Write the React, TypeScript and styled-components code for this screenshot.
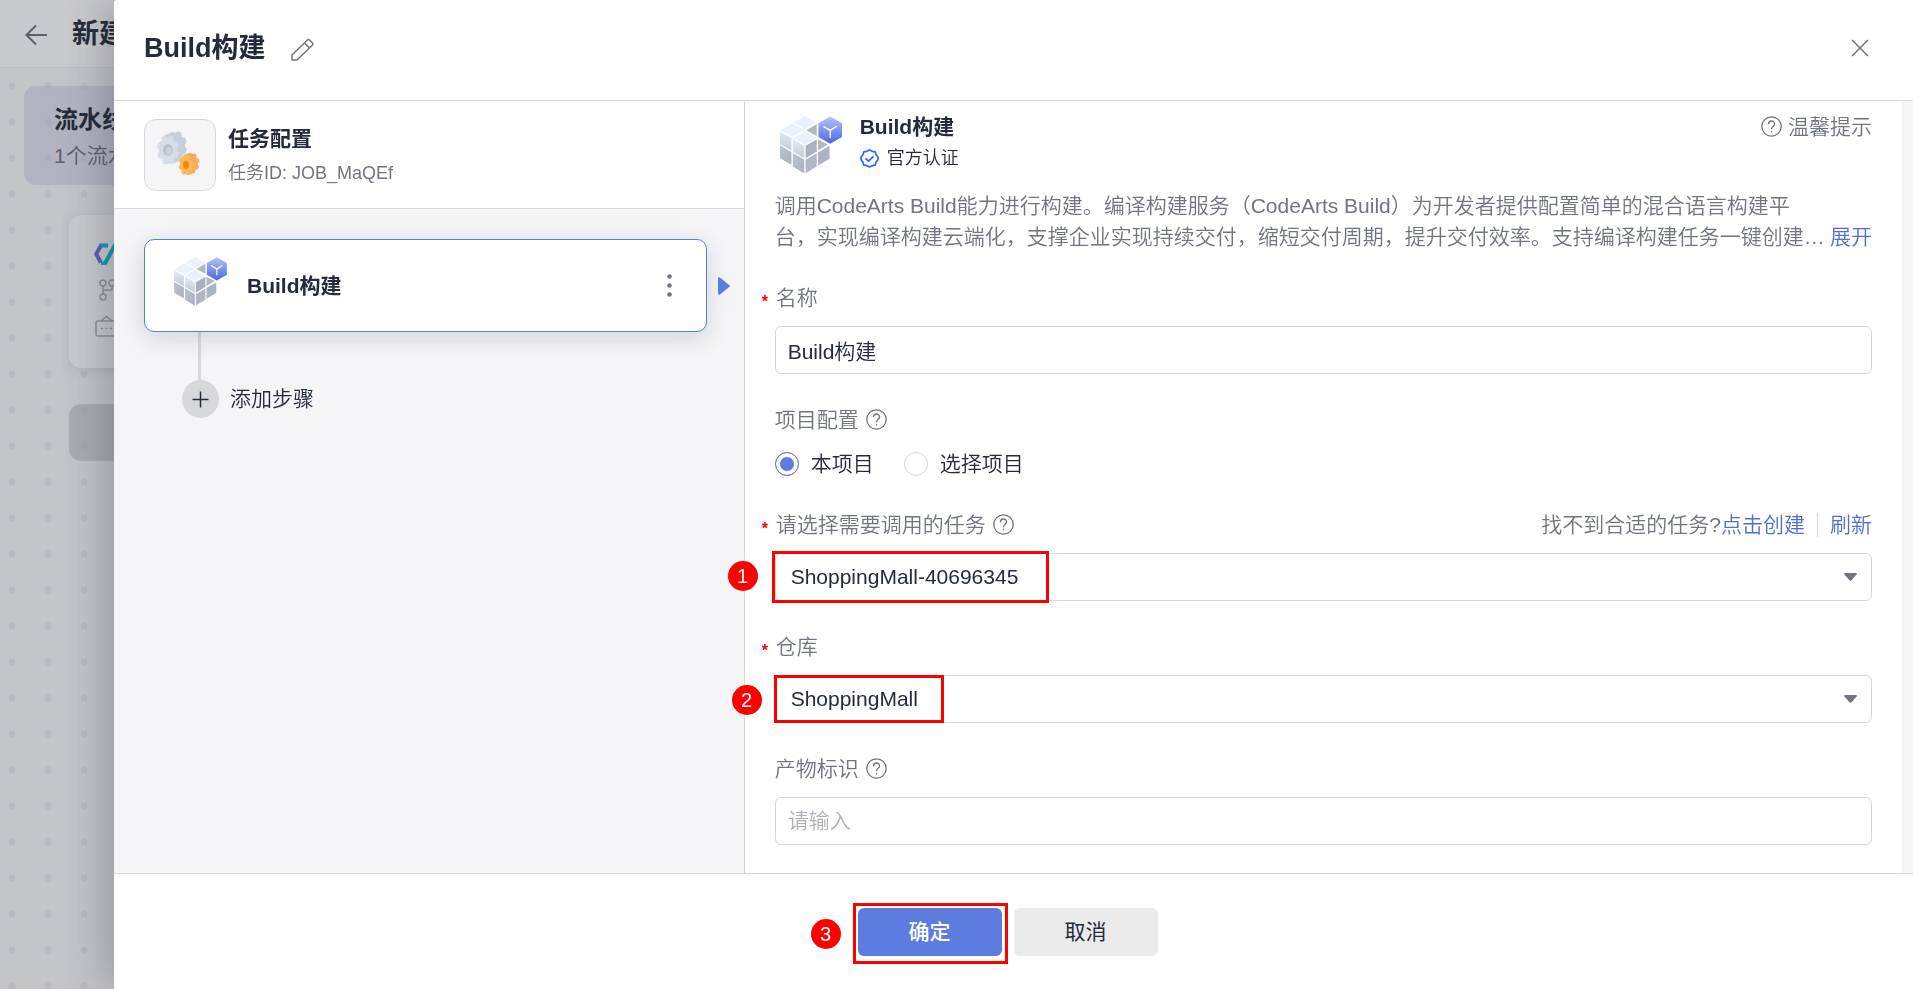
import React, { useId, useState } from "react";
import styled, { createGlobalStyle, css } from "styled-components";

const color = {
  ink: "#252b3a",
  muted: "#71757f",
  line: "#d7d8da",
  brand: "#5e7ce0",
  link: "#526ecc",
  pane: "#f5f5f8",
  mark: "#ff0000",
};

const GlobalStyle = createGlobalStyle`
  * { box-sizing: border-box; }
  body {
    margin: 0;
    color: ${color.ink};
    background: #c4c5c9;
    font-family: "Liberation Sans", "Noto Sans CJK SC", sans-serif;
    font-size: 21px;
    font-weight: 350;
    line-height: 32px;
  }
  button, input, select { font: inherit; color: inherit; }
  h1, h2, h3, p { margin: 0; }
  svg { display: block; flex: none; }
`;

/* ---------- page behind the drawer ---------- */

const Backdrop = styled.main`
  min-height: 100vh;
  overflow: hidden;
  background: radial-gradient(circle at 12px 18px, #b9babf 3px, transparent 4px) 0 68px / 36px 36px #c4c5c9;
`;

const BackHeader = styled.header`
  display: flex;
  align-items: center;
  gap: 24px;
  height: 68px;
  padding: 2px 0 0 24px;
  background: #c9cacd;
  border-bottom: 1px solid #bcbdc0;
  white-space: nowrap;
`;

const PlainButton = styled.button`
  display: flex;
  padding: 0;
  border: 0;
  background: none;
  color: ${color.muted};
  cursor: pointer;
`;

const BackTitle = styled.h1`
  font-size: 27px;
  font-weight: 700;
  padding-bottom: 2px;
`;

const SourceStage = styled.section`
  margin: 18px 0 0 24px;
  height: 99px;
  padding: 16px 30px;
  border-radius: 12px 0 0 12px;
  background: rgba(158, 161, 186, 0.5);
  white-space: nowrap;
  overflow: hidden;
`;

const StageTitle = styled.h2`
  font-size: 24px;
  line-height: 35px;
`;

const StageText = styled.p`
  color: #5d6069;
  line-height: 38px;
`;

const SourceCard = styled.section`
  display: flex;
  flex-direction: column;
  gap: 14px;
  margin: 30px 0 0 69px;
  height: 153px;
  padding: 28px 0 0 25px;
  border-radius: 12px 0 0 12px;
  background: #c9cacd;
  color: #8f9299;
  box-shadow: 0 3px 12px rgba(37, 43, 58, 0.12);
`;

const AddSource = styled.div`
  margin: 36px 0 0 69px;
  height: 57px;
  border-radius: 12px 0 0 12px;
  background: rgba(144, 147, 156, 0.5);
`;

/* ---------- drawer ---------- */

const Drawer = styled.aside`
  position: fixed;
  inset: 0 0 0 114px;
  display: flex;
  flex-direction: column;
  background: #fff;
  border-top-left-radius: 3px;
  box-shadow: -6px 0 45px rgba(37, 43, 58, 0.32);
`;

const DrawerHeader = styled.header`
  flex: none;
  display: flex;
  align-items: center;
  gap: 25px;
  height: 101px;
  padding: 0 44px 4px 30px;
  border-bottom: 1px solid ${color.line};
`;

const DrawerTitle = styled.h2`
  font-size: 27px;
`;

const CloseButton = styled(PlainButton)`
  margin-left: auto;
`;

const DrawerBody = styled.div`
  flex: 1;
  display: grid;
  grid-template-columns: 35% 1fr;
`;

const StepPane = styled.section`
  background: ${color.pane};
`;

const JobHeader = styled.header`
  display: flex;
  gap: 12px;
  height: 108px;
  padding: 18px 30px 0;
  background: #fff;
  border-bottom: 1px solid ${color.line};
`;

const JobIcon = styled.div`
  width: 72px;
  height: 72px;
  border: 1px solid ${color.line};
  border-radius: 12px;
  background: ${color.pane};
`;

const JobTitle = styled.h3`
  font-size: 21px;
  padding-top: 4px;
`;

const JobId = styled.p`
  font-size: 18px;
  line-height: 36px;
  color: ${color.muted};
`;

const StepRow = styled.div`
  display: flex;
  align-items: center;
  gap: 11px;
  padding: 30px 14px 0 30px;
`;

const StepCard = styled.article`
  flex: 1;
  display: flex;
  align-items: center;
  height: 93px;
  padding: 0 34px 0 29px;
  border: 1px solid ${color.brand};
  border-radius: 10px;
  background: #fff;
  box-shadow: 0 6px 24px rgba(37, 43, 58, 0.16);
`;

const StepIcon = styled.div`
  padding-bottom: 8px;
  margin-right: 20px;
`;

const StepName = styled.h3`
  flex: 1;
  font-size: 21px;
`;

const Connector = styled.div`
  width: 3px;
  height: 48px;
  margin-left: 84px;
  background: ${color.line};
`;

const AddStep = styled(PlainButton)`
  align-items: center;
  gap: 11px;
  margin-left: 68px;
  color: ${color.ink};
`;

const PlusDot = styled.span`
  display: grid;
  place-items: center;
  width: 37px;
  height: 38px;
  border-radius: 50%;
  background: ${color.line};
`;

/* ---------- settings pane ---------- */

const SettingsPane = styled.section`
  min-width: 0;
  padding: 10px 30px 28px;
  border-left: 1px solid ${color.line};
  border-right: 11px solid ${color.pane};
`;

const PluginHeader = styled.header`
  display: flex;
  height: 64px;
  padding-left: 5px;
`;

const PluginIcon = styled.div`
  padding-top: 5px;
  margin-right: 18px;
`;

const PluginName = styled.h3`
  font-size: 21px;
`;

const Certified = styled.p`
  display: flex;
  align-items: center;
  gap: 8px;
  font-size: 18px;
  line-height: 30px;
`;

const TipButton = styled(PlainButton)`
  align-items: center;
  align-self: flex-start;
  gap: 6px;
  margin-left: auto;
`;

const Summary = styled.div`
  display: flex;
  align-items: flex-end;
  gap: 4px;
  padding: 15px 0 30px;
  color: ${color.muted};
  line-height: 31px;
`;

const SummaryText = styled.p`
  flex: 1;
`;

const Link = styled.a`
  color: ${color.link};
  text-decoration: none;
  white-space: nowrap;
`;

const Form = styled.form`
  display: flex;
  flex-direction: column;
  gap: 30px;
`;

const Field = styled.div`
  display: flex;
  flex-direction: column;
  gap: 12px;
`;

const LabelRow = styled.div`
  display: flex;
  align-items: center;
  gap: 7px;
  height: 32px;
  color: ${color.muted};
`;

const Label = styled.label<{ $required?: boolean }>`
  ${(p) =>
    p.$required &&
    css`
      margin-left: -13px;
      &::before {
        content: "*";
        display: inline-block;
        width: 14px;
        color: ${color.mark};
        font-size: 16px;
        font-weight: 700;
        line-height: 16px;
        vertical-align: -2px;
      }
    `}
`;

const HelpMark = styled.span`
  display: block;
  padding-bottom: 2px;
`;

const Assist = styled.div`
  display: flex;
  align-items: center;
  margin-left: auto;
`;

const Divider = styled.span`
  width: 1px;
  height: 24px;
  margin: 0 12px;
  background: ${color.line};
`;

const controlBox = css`
  width: 100%;
  height: 48px;
  border: 1px solid ${color.line};
  border-radius: 6px;
  background: #fff;
  outline: 0;
`;

const TextInput = styled.input`
  ${controlBox}
  padding: 0 12px;
  &::placeholder { color: #adb0b8; opacity: 1; }
`;

const SelectBox = styled.div`
  position: relative;
`;

const NativeSelect = styled.select`
  ${controlBox}
  display: block;
  appearance: none;
  padding: 0 40px 0 15px;
`;

const Caret = styled.svg`
  position: absolute;
  right: 15px;
  top: 20px;
  pointer-events: none;
`;

const RadioRow = styled.div`
  display: flex;
  align-items: center;
  gap: 30px;
  height: 31px;
`;

const RadioLabel = styled.label`
  display: flex;
  align-items: center;
  gap: 12px;
`;

const Radio = styled.input`
  appearance: none;
  width: 24px;
  height: 24px;
  margin: 0;
  border: 1px solid ${color.line};
  border-radius: 50%;
  background: #fff;
  &:checked {
    border-color: ${color.brand};
    background: ${color.brand};
    box-shadow: inset 0 0 0 4px #fff;
  }
`;

/* ---------- footer ---------- */

const Footer = styled.footer`
  flex: none;
  display: flex;
  justify-content: center;
  gap: 12px;
  padding: 34px 12px 33px 0;
  border-top: 1px solid ${color.line};
`;

const ActionBox = styled.div`
  position: relative;
`;

const Action = styled.button<{ $primary?: boolean }>`
  display: block;
  width: 144px;
  height: 48px;
  border: 0;
  border-radius: 6px;
  background: ${(p) => (p.$primary ? color.brand : "#ebebeb")};
  color: ${(p) => (p.$primary ? "#fff" : color.ink)};
  font-weight: ${(p) => (p.$primary ? 500 : 400)};
  cursor: pointer;
`;

/* ---------- numbered callouts over the controls ---------- */

const Outline = styled.span<{ $top: number; $left: number; $width: number; $height: number }>`
  position: absolute;
  top: ${(p) => p.$top}px;
  left: ${(p) => p.$left}px;
  width: ${(p) => p.$width}px;
  height: ${(p) => p.$height}px;
  border: 3px solid ${color.mark};
  pointer-events: none;
`;

const Badge = styled.span<{ $top: number; $left: number }>`
  position: absolute;
  top: ${(p) => p.$top}px;
  left: ${(p) => p.$left}px;
  width: 30px;
  height: 30px;
  border-radius: 50%;
  background: ${color.mark};
  color: #fff;
  font-size: 20px;
  line-height: 30px;
  text-align: center;
`;

/* ---------- drawings ---------- */

const HelpIcon = () => (
  <HelpMark>
    <svg width="21" height="21" viewBox="0 0 21 21" fill="none" stroke={color.muted} strokeWidth="1.3">
      <circle cx="10.5" cy="10.5" r="9.7" />
      <path d="M7.4 8.200C7.400 4 13.600 4 13.600 7.900c0 2.300-3.100 2.400-3.100 5.300" />
      <path d="M10.5 14.900v1.500" />
    </svg>
  </HelpMark>
);

const CubeIcon = ({ width }: { width: number }) => {
  const id = useId();
  return (
    <svg width={width} height={Math.round((width * 170) / 183)} viewBox="33 35 184 171">
      <defs>
        <linearGradient id={id + "b"} x1="0" y1="0" x2="0" y2="1">
          <stop offset="0" stopColor="#b5c4fb" />
          <stop offset="1" stopColor="#4a68dc" />
        </linearGradient>
        <linearGradient id={id + "l"} x1="0" y1="0" x2="0" y2="1">
          <stop offset="0" stopColor="#e2ebf5" />
          <stop offset="1" stopColor="#c3cad6" />
        </linearGradient>
        <linearGradient id={id + "g"} x1="0" y1="0" x2="1" y2="1">
          <stop offset="0" stopColor="#bcc4d1" />
          <stop offset="1" stopColor="#a9b0bf" />
        </linearGradient>
      </defs>
      <g fill="#e8f1fc">
        <path d="M107 35l33 19-33 20-34-20z" />
        <path d="M70 57l34 20-34 20-35-20z" />
        <path d="M107 80l34 20-34 20-35-20z" />
      </g>
      <path d="M142 58v36l-31-17z" fill="#b2b8c1" />
      <path d="M33 81l34 19v37l-34-19z" fill={`url(#${id}l)`} />
      <path d="M71 103l34 20v37l-34-20z" fill={`url(#${id}l)`} />
      <path d="M33 122l34 19v38l-34-19z" fill={`url(#${id}g)`} />
      <path d="M71 144l34 20v41l-34-21z" fill={`url(#${id}g)`} />
      <path d="M109 123l33-19v36l-33 20z" fill="#aab1be" />
      <path d="M109 164l33-19v39l-33 20z" fill="#b1b7c4" />
      <path d="M146 143l34-20v38l-34 20z" fill="#adb4c1" />
      <path d="M146 104l29 15-29 18z" fill="#b2b8c1" />
      <path d="M182 36l35 20v41l-35 20-35-20V56z" fill={`url(#${id}b)`} />
      <path d="M162 65l20 12 19-12M182 77v22" fill="none" stroke="#fff" strokeWidth="4" />
    </svg>
  );
};

const gearPath = (cx: number, cy: number, rx: number, ry: number, turn: number) => {
  const points: string[] = [];
  const teeth = 8;
  for (let i = 0; i < teeth; i += 1) {
    [
      [0, 0.8],
      [0.18, 1],
      [0.5, 1],
      [0.68, 0.8],
    ].forEach(([step, r]) => {
      const a = ((i + step + turn) / teeth) * Math.PI * 2;
      points.push(`${(cx + Math.cos(a) * rx * r).toFixed(1)} ${(cy + Math.sin(a) * ry * r).toFixed(1)}`);
    });
  }
  return `M${points.join("L")}Z`;
};

const GearsIcon = () => (
  <svg width="70" height="70" viewBox="0 0 70 70" strokeLinejoin="round">
    {[8, 7, 6, 5, 4, 3, 2, 1].map((d) => (
      <path key={d} d={gearPath(23 + d, 30 - d / 2, 10, 14, 0.1)} fill="#c6cfdb" stroke="#c6cfdb" strokeWidth="2" />
    ))}
    <path d={gearPath(23, 30, 10, 14, 0.1)} fill="#d6dde8" stroke="#d6dde8" strokeWidth="2" />
    <ellipse cx="23" cy="30" rx="5" ry="6" fill="#b7c1ce" />
    <ellipse cx="24" cy="31" rx="3" ry="4" fill="#c9d1dc" />
    {[6, 5, 4, 3, 2, 1].map((d) => (
      <path key={d} d={gearPath(41 + d, 45 - d / 3, 7, 10, 0.3)} fill="#f5a23a" stroke="#f5b35c" />
    ))}
    <path d={gearPath(41, 45, 7, 10, 0.3)} fill="#fdb95f" stroke="#fdb95f" />
    <ellipse cx="41" cy="45" rx="3" ry="4" fill="#ff8500" />
  </svg>
);

const CertifiedIcon = () => (
  <svg width="19" height="19" viewBox="0 0 19 19" fill="none" stroke="#2468ff" strokeWidth="1.7" strokeLinejoin="round">
    <path d="M9.5 1l2.7 1.300 3 .6.9 2.900L18 8.200v2.600l-1.900 2.400-.9 2.900-3 .6L9.500 18l-2.700-1.300-3-.6-.9-2.900L1 10.800V8.200l1.900-2.400.9-2.900 3-.6z" />
    <path d="M5.5 9.4l3 2.8 5-4.9" />
  </svg>
);

const LogoIcon = () => (
  <svg width="36" height="22" viewBox="0 0 36 22" fill="none" strokeWidth="4">
    <path d="M8 2.5H7L2.3 11l4.500 8.500" stroke="#5464b4" />
    <path d="M7 2.5h7" stroke="#1a9bb0" />
    <path d="M7 20.500h4L22 0" stroke="#1499b8" />
    <path d="M22 19h7l5-8-5-8.500" stroke="#17a3a5" />
  </svg>
);

const BranchIcon = () => (
  <svg width="24" height="22" viewBox="-5 0 24 22" fill="none" stroke="currentColor" strokeWidth="1.6">
    <circle cx="4" cy="4" r="3" />
    <circle cx="4" cy="18" r="3" />
    <circle cx="13" cy="4" r="3" />
    <path d="M4 7v8M13 7v4H4" />
  </svg>
);

const PackageIcon = () => (
  <svg width="24" height="22" viewBox="0 0 24 22" fill="none" stroke="currentColor" strokeWidth="1.6">
    <rect x="2" y="6" width="21" height="15" rx="2" />
    <path d="M7 6l5.500-4.500L18 6" />
    <path d="M7 13.500h2M11.500 13.500h2M16 13.500h2" />
  </svg>
);

const Help = ({ about }: { about: string }) => (
  <PlainButton type="button" aria-label={about}>
    <HelpIcon />
  </PlainButton>
);

const CaretIcon = () => (
  <Caret width="13" height="8" viewBox="0 0 13 8" fill={color.muted}>
    <path d="M1 0h11q1.400.3.600 1.500L7.500 7.300q-1 1-2 0L.4 1.500Q-.4.300 1 0z" />
  </Caret>
);

export default function App() {
  const [name, setName] = useState("Build构建");
  const [artifact, setArtifact] = useState("");
  const [scope, setScope] = useState("current");

  return (
    <>
      <GlobalStyle />
      <Backdrop>
        <BackHeader>
          <PlainButton type="button" aria-label="返回">
            <svg width="24" height="22" viewBox="0 0 24 22" fill="none" stroke="#5d6069" strokeWidth="2">
              <path d="M23 11H3M12 1.500L2.500 11 12 20.500" />
            </svg>
          </PlainButton>
          <BackTitle>新建</BackTitle>
        </BackHeader>
        <SourceStage>
          <StageTitle>流水线</StageTitle>
          <StageText>1个流水</StageText>
        </SourceStage>
        <SourceCard>
          <LogoIcon />
          <BranchIcon />
          <PackageIcon />
        </SourceCard>
        <AddSource />
      </Backdrop>

      <Drawer aria-label="Build构建">
        <DrawerHeader>
          <DrawerTitle>Build构建</DrawerTitle>
          <PlainButton type="button" aria-label="编辑">
            <svg width="23" height="25" viewBox="0 -2 23 25" fill="none" stroke="currentColor" strokeWidth="1.500" strokeLinejoin="round">
              <path d="M1 22v-5L16.500 2q1-1 2 0L21.500 5q1 1 0 2L6 22zM13.500 5l5 5" />
            </svg>
          </PlainButton>
          <CloseButton type="button" aria-label="关闭">
            <svg width="18" height="18" viewBox="0 0 18 18" fill="none" stroke="currentColor" strokeWidth="1.500">
              <path d="M1 1l16 16M17 1L1 17" />
            </svg>
          </CloseButton>
        </DrawerHeader>

        <DrawerBody>
          <StepPane>
            <JobHeader>
              <JobIcon>
                <GearsIcon />
              </JobIcon>
              <div>
                <JobTitle>任务配置</JobTitle>
                <JobId>任务ID: JOB_MaQEf</JobId>
              </div>
            </JobHeader>
            <StepRow>
              <StepCard>
                <StepIcon>
                  <CubeIcon width={53} />
                </StepIcon>
                <StepName>Build构建</StepName>
                <PlainButton type="button" aria-label="更多">
                  <svg width="5" height="24" viewBox="0 0 5 24" fill={color.muted}>
                    <circle cx="2.500" cy="2.500" r="2.300" />
                    <circle cx="2.500" cy="11.500" r="2.300" />
                    <circle cx="2.500" cy="20.500" r="2.300" />
                  </svg>
                </PlainButton>
              </StepCard>
              <svg width="12" height="18" viewBox="0 0 12 18" fill={color.brand}>
                <path d="M0 1.500Q0 0 1.500.2L2.500 1l9 7.300q.8.700 0 1.400L2.500 17l-1 .8Q0 18 0 16.500z" />
              </svg>
            </StepRow>
            <Connector />
            <AddStep type="button">
              <PlusDot>
                <svg width="17" height="17" viewBox="0 0 17 17" stroke={color.ink} strokeWidth="1.500">
                  <path d="M8.500 0.500v16M0.500 8.500h16" />
                </svg>
              </PlusDot>
              添加步骤
            </AddStep>
          </StepPane>

          <SettingsPane>
            <PluginHeader>
              <PluginIcon>
                <CubeIcon width={62} />
              </PluginIcon>
              <div>
                <PluginName>Build构建</PluginName>
                <Certified>
                  <CertifiedIcon />
                  官方认证
                </Certified>
              </div>
              <TipButton type="button">
                <HelpIcon />
                温馨提示
              </TipButton>
            </PluginHeader>
            <Summary>
              <SummaryText>
                调用CodeArts Build能力进行构建。编译构建服务（CodeArts Build）为开发者提供配置简单的混合语言构建平台，实现编译构建云端化，支撑企业实现持续交付，缩短交付周期，提升交付效率。支持编译构建任务一键创建…
              </SummaryText>
              <Link href="#more">展开</Link>
            </Summary>

            <Form id="plugin-form" onSubmit={(e) => e.preventDefault()}>
              <Field>
                <LabelRow>
                  <Label $required htmlFor="name">名称</Label>
                </LabelRow>
                <TextInput id="name" value={name} onChange={(e) => setName(e.target.value)} />
              </Field>

              <Field role="radiogroup" aria-labelledby="scope-label">
                <LabelRow>
                  <span id="scope-label">项目配置</span>
                  <Help about="项目配置说明" />
                </LabelRow>
                <RadioRow>
                  <RadioLabel>
                    <Radio type="radio" name="scope" checked={scope === "current"} onChange={() => setScope("current")} />
                    本项目
                  </RadioLabel>
                  <RadioLabel>
                    <Radio type="radio" name="scope" checked={scope === "other"} onChange={() => setScope("other")} />
                    选择项目
                  </RadioLabel>
                </RadioRow>
              </Field>

              <Field>
                <LabelRow>
                  <Label $required htmlFor="task">请选择需要调用的任务</Label>
                  <Help about="任务说明" />
                  <Assist>
                    找不到合适的任务?<Link href="#create">点击创建</Link>
                    <Divider />
                    <Link href="#refresh">刷新</Link>
                  </Assist>
                </LabelRow>
                <SelectBox>
                  <NativeSelect id="task">
                    <option>ShoppingMall-40696345</option>
                  </NativeSelect>
                  <CaretIcon />
                  <Outline $top={-2} $left={-3} $width={277} $height={52} />
                  <Badge $top={8} $left={-47}>1</Badge>
                </SelectBox>
              </Field>

              <Field>
                <LabelRow>
                  <Label $required htmlFor="repo">仓库</Label>
                </LabelRow>
                <SelectBox>
                  <NativeSelect id="repo">
                    <option>ShoppingMall</option>
                  </NativeSelect>
                  <CaretIcon />
                  <Outline $top={0} $left={-1} $width={170} $height={48} />
                  <Badge $top={10} $left={-43}>2</Badge>
                </SelectBox>
              </Field>

              <Field>
                <LabelRow>
                  <Label htmlFor="artifact">产物标识</Label>
                  <Help about="产物标识说明" />
                </LabelRow>
                <TextInput
                  id="artifact"
                  placeholder="请输入"
                  value={artifact}
                  onChange={(e) => setArtifact(e.target.value)}
                />
              </Field>
            </Form>
          </SettingsPane>
        </DrawerBody>

        <Footer>
          <ActionBox>
            <Action $primary type="submit" form="plugin-form">确定</Action>
            <Outline $top={-5} $left={-5} $width={155} $height={61} />
            <Badge $top={11} $left={-47}>3</Badge>
          </ActionBox>
          <Action type="button">取消</Action>
        </Footer>
      </Drawer>
    </>
  );
}
